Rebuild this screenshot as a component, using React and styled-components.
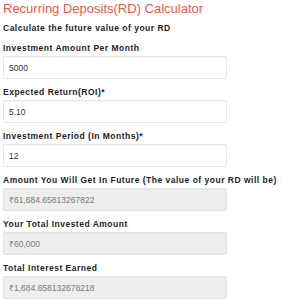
import React from "react";
import styled, { createGlobalStyle } from "styled-components";

const GlobalStyle = createGlobalStyle`
  html, body {
    margin: 0;
    padding: 0;
    background: #fff;
  }
  body {
    font-family: "Liberation Sans", Arial, sans-serif;
  }
`;

const fields = [
  { label: "Investment Amount Per Month", value: "5000" },
  { label: "Expected Return(ROI)*", value: "5.10" },
  { label: "Investment Period (In Months)*", value: "12" },
  {
    label: "Amount You Will Get In Future (The value of your RD will be)",
    value: "₹61,684.65813267822",
    result: true,
  },
  { label: "Your Total Invested Amount", value: "₹60,000", result: true },
  { label: "Total Interest Earned", value: "₹1,684.658132678218", result: true },
];

export default function App() {
  return (
    <Page>
      <GlobalStyle />
      <Title>Recurring Deposits(RD) Calculator</Title>
      <Subtitle>Calculate the future value of your RD</Subtitle>
      {fields.map((f) => (
        <Field key={f.label}>
          <Label>{f.label}</Label>
          <Input
            $result={f.result}
            defaultValue={f.value}
            readOnly={f.result}
          />
        </Field>
      ))}
    </Page>
  );
}

const Page = styled.div`
  width: 283px;
  height: 300px;
  overflow: hidden;
  padding: 0 3px;
  box-sizing: border-box;
`;

const Title = styled.h1`
  margin: 0;
  padding-top: 1px;
  font-size: 13px;
  line-height: 16px;
  font-weight: normal;
  color: #ec5a48;
`;

const Subtitle = styled.div`
  margin-top: 6px;
  font-size: 8.5px;
  line-height: 10px;
  font-weight: bold;
  letter-spacing: 0.5px;
  color: #1d1d1d;
`;

const Field = styled.div`
  display: flex;
  flex-direction: column;
  gap: 3px;
  margin-top: 10px;

  & + & {
    margin-top: 8px;
  }
`;

const Label = styled.label`
  font-size: 8.5px;
  line-height: 10px;
  font-weight: bold;
  letter-spacing: 0.5px;
  color: #1d1d1d;
  white-space: nowrap;
`;

const Input = styled.input`
  width: 224px;
  height: 23px;
  box-sizing: border-box;
  padding: 0 5px;
  border: 1px solid ${(p) => (p.$result ? "#e2e2e2" : "#e6e6e6")};
  border-radius: 2px;
  background: ${(p) => (p.$result ? "#eeeeee" : "#ffffff")};
  box-shadow: inset 0 1px 1px rgba(0, 0, 0, 0.03);
  font-family: "Liberation Sans", Arial, sans-serif;
  font-size: 8.5px;
  color: ${(p) => (p.$result ? "#7a7a7a" : "#333333")};
  outline: none;
`;
